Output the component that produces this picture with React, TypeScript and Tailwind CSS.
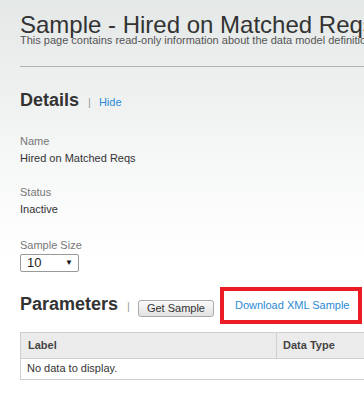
export default function App() {
  return (
    <div
      className="w-[364px] h-[412px] overflow-hidden bg-[linear-gradient(to_bottom,#e4e8e7_0px,#f6f7f7_160px,#ffffff_260px)] text-[#333]"
      style={{ fontFamily: '"Liberation Sans", Arial, sans-serif' }}
    >
      <div className="w-[700px] pl-5">
        {/* Page header */}
        <div className="pt-[11px] text-[24px] leading-[27px] whitespace-nowrap text-[#333]">
          Sample - Hired on Matched Reqs
        </div>
        <div className="mt-[-4px] text-[11px] leading-[13px] whitespace-nowrap text-[#555]">
          This page contains read-only information about the data model definition.
        </div>
        <div className="mt-[19px] border-t border-[#b3b3b3]" />

        {/* Details */}
        <div className="mt-[23px] flex items-baseline">
          <span className="text-[18px] leading-[20px] font-bold text-[#333]">Details</span>
          <span className="ml-[9px] text-[11px] text-[#999]">|</span>
          <a className="ml-[8px] text-[11px] text-[#2a8ad6] cursor-pointer">Hide</a>
        </div>

        <div className="mt-[23px] text-[11px] leading-[14px] text-[#777]">Name</div>
        <div className="mt-[3px] text-[11px] leading-[14px] text-[#333]">Hired on Matched Reqs</div>

        <div className="mt-[20px] text-[11px] leading-[14px] text-[#777]">Status</div>
        <div className="mt-[3px] text-[11px] leading-[14px] text-[#333]">Inactive</div>

        <div className="mt-[22px] text-[11px] leading-[14px] text-[#777]">Sample Size</div>
        <div className="mt-[2px] flex h-[18px] w-[59px] items-center justify-between rounded-[2px] border border-[#999] bg-white pl-[6px] pr-[5px]">
          <span className="text-[13px] leading-[14px] text-[#222]">10</span>
          <span className="text-[8px] leading-[8px] text-[#111]">▼</span>
        </div>

        {/* Parameters */}
        <div className="mt-[15px] flex items-start h-[37px]">
          <span className="mt-[7px] text-[18px] leading-[20px] font-bold text-[#333] whitespace-nowrap">Parameters</span>
          <span className="mt-[12px] ml-[9px] text-[11px] leading-[14px] text-[#999]">|</span>
          <button className="mt-[13px] ml-[8px] h-[17px] w-[76px] rounded-[3px] border border-[#a9a9a9] bg-[linear-gradient(to_bottom,#fafafa,#e2e2e2)] text-[11px] leading-[13px] text-[#333] whitespace-nowrap">
            Get Sample
          </button>
          <div className="ml-[6px] flex h-[37px] w-[142px] items-center border-4 border-[#ec1c24] pl-[11px]">
            <a className="text-[11px] leading-[13px] text-[#2a8ad6] cursor-pointer whitespace-nowrap">Download XML Sample</a>
          </div>
        </div>

        {/* Parameters table */}
        <div className="mt-[8px] w-[600px] border border-[#cfcfcf]">
          <div className="flex h-[26px] items-center bg-[#ebebeb] border-b border-[#cfcfcf]">
            <div className="w-[256px] h-full flex items-center pl-[7px] border-r border-[#cfcfcf] text-[11px] font-bold text-[#444]">
              Label
            </div>
            <div className="pl-[6px] text-[11px] font-bold text-[#444]">Data Type</div>
          </div>
          <div className="h-[20px] flex items-center pl-[6px] text-[11px] text-[#333] bg-white">
            No data to display.
          </div>
        </div>
      </div>
    </div>
  );
}
